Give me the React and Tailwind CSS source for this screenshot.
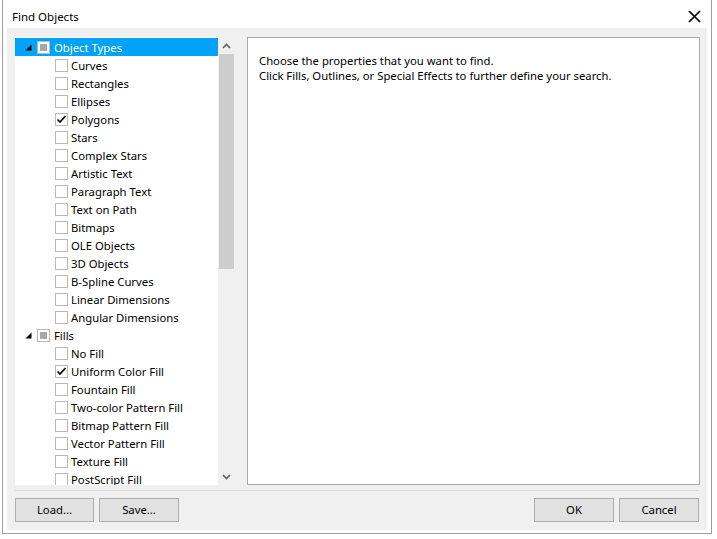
import React from "react";

const objectTypes = [
    { name: "Curves" },
    { name: "Rectangles" },
    { name: "Ellipses" },
    { name: "Polygons", checked: true },
    { name: "Stars" },
    { name: "Complex Stars" },
    { name: "Artistic Text" },
    { name: "Paragraph Text" },
    { name: "Text on Path" },
    { name: "Bitmaps" },
    { name: "OLE Objects" },
    { name: "3D Objects" },
    { name: "B-Spline Curves" },
    { name: "Linear Dimensions" },
    { name: "Angular Dimensions" },
];

const fills = [
    { name: "No Fill" },
    { name: "Uniform Color Fill", checked: true },
    { name: "Fountain Fill" },
    { name: "Two-color Pattern Fill" },
    { name: "Bitmap Pattern Fill" },
    { name: "Vector Pattern Fill" },
    { name: "Texture Fill" },
    { name: "PostScript Fill" },
];

function Expander() {
    return (
        <svg width="7" height="7" viewBox="0 0 7 7" className="shrink-0">
            <polygon points="6.5,0.5 6.5,6.5 0.5,6.5" fill="#000" />
        </svg>
    );
}

function Check({ checked, partial }) {
    return (
        <div className="w-[13px] h-[13px] border border-[#b9b9b9] bg-white shrink-0 flex items-center justify-center">
            {partial && <div className="w-[7px] h-[7px] bg-[#a8a8a8]" />}
            {checked && (
                <svg width="11" height="11" viewBox="0 0 11 11">
                    <path d="M1.5 5.5 L4 8 L9.5 2" fill="none" stroke="#000" strokeWidth="1.6" />
                </svg>
            )}
        </div>
    );
}

function GroupRow({ label, selected }) {
    return (
        <div className={`h-[18px] flex items-center pl-[10px] ${selected ? 'bg-[#00a3f7] text-white' : 'text-black'}`}>
            <Expander />
            <div className="ml-[5px]"><Check partial /></div>
            <span className="ml-[4px] pt-[2px]">{label}</span>
        </div>
    );
}

function ItemRow({ item }) {
    return (
        <div className="h-[18px] flex items-center pl-[40px] text-black">
            <Check checked={item.checked} />
            <span className="ml-[3px] pt-[2px] whitespace-nowrap">{item.name}</span>
        </div>
    );
}

function Chevron({ up }) {
    return (
        <svg width="9" height="6" viewBox="0 0 9 6">
            <path d={up ? "M1 5 L4.5 1.5 L8 5" : "M1 1 L4.5 4.5 L8 1"} fill="none" stroke="#606060" strokeWidth="1.6" />
        </svg>
    );
}

function Button({ children, className = "" }) {
    return (
        <button className={`h-[24px] bg-[#e1e1e1] border border-[#adadad] text-black text-[11.3px] ${className}`}>
            {children}
        </button>
    );
}

export default function App() {
    return (
        <div className="w-[717px] h-[539px] bg-white overflow-hidden" style={{ fontFamily: '"Segoe UI", "Noto Sans", sans-serif' }}>
            <div className="ml-[2px] w-[710px] h-[534px] border-l border-r border-b border-[#9e9e9e] flex flex-col">
                {/* title bar */}
                <div className="h-[28px] shrink-0 flex items-center justify-between pl-[9px] pr-[10px] pt-[6px]">
                    <span className="text-[11.5px] text-black">Find Objects</span>
                    <svg width="13" height="13" viewBox="0 0 13 13" className="mb-[2px]">
                        <path d="M1 1 L12 12 M12 1 L1 12" stroke="#000" strokeWidth="1.7" />
                    </svg>
                </div>

                {/* body */}
                <div className="mx-[4px] h-[502px] bg-[#f0f0f0] flex flex-col pt-[9px] pl-[8px] pr-[7px]">
                    <div className="flex gap-[12px] h-[448px] text-[11.3px]">
                        {/* tree */}
                        <div className="w-[220px] h-full flex bg-white">
                            <div className="flex-1 overflow-hidden">
                                <div className="pt-[1px]">
                                    <GroupRow label="Object Types" selected />
                                    {objectTypes.map((o) => <ItemRow key={o.name} item={o} />)}
                                    <GroupRow label="Fills" />
                                    {fills.map((o) => <ItemRow key={o.name} item={o} />)}
                                </div>
                            </div>
                            {/* scrollbar */}
                            <div className="w-[17px] h-full bg-[#f0f0f0] flex flex-col">
                                <div className="h-[17px] flex items-center justify-center"><Chevron up /></div>
                                <div className="h-[215px] mx-[1px] bg-[#cdcdcd]" />
                                <div className="flex-1" />
                                <div className="h-[17px] flex items-center justify-center"><Chevron /></div>
                            </div>
                        </div>

                        {/* info panel */}
                        <div className="flex-1 h-full bg-white border border-[#a9a9a9] px-[11px] pt-[15px] leading-[15px] text-black">
                            <div>Choose the properties that you want to find.</div>
                            <div>Click Fills, Outlines, or Special Effects to further define your search.</div>
                        </div>
                    </div>

                    <div className="mt-[5px] h-px bg-[#dadada] mr-[1px]" />

                    <div className="mt-[7px] flex justify-between">
                        <div className="flex gap-[5px]">
                            <Button className="w-[79px]">Load...</Button>
                            <Button className="w-[80px]">Save...</Button>
                        </div>
                        <div className="flex gap-[5px] mr-[1px]">
                            <Button className="w-[80px]">OK</Button>
                            <Button className="w-[80px]">Cancel</Button>
                        </div>
                    </div>
                </div>
            </div>
        </div>
    );
}
